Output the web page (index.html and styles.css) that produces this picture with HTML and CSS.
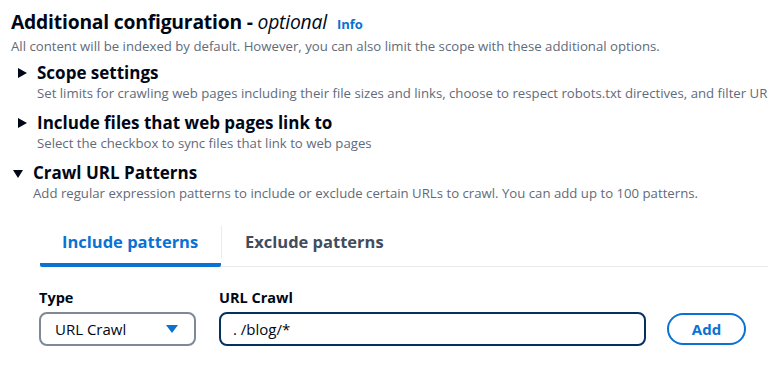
FILE: index.html
```html
<!DOCTYPE html>
<html lang="en">
<head>
    <meta charset="UTF-8">
    <title>Additional configuration</title>
    <link rel="stylesheet" href="styles.css">
</head>
<body>
    <div class="config">
        <div class="header">
            <h2>Additional configuration - <i>optional</i></h2>
            <a href="#" class="info">Info</a>
        </div>
        <p class="desc">All content will be indexed by default. However, you can also limit the scope with these additional options.</p>

        <!-- Collapsed sections -->
        <div class="section">
            <div class="section-title">
                <span class="caret"></span>
                <h3>Scope settings</h3>
            </div>
            <p class="desc">Set limits for crawling web pages including their file sizes and links, choose to respect robots.txt directives, and filter URLs</p>
        </div>

        <div class="section">
            <div class="section-title">
                <span class="caret"></span>
                <h3>Include files that web pages link to</h3>
            </div>
            <p class="desc">Select the checkbox to sync files that link to web pages</p>
        </div>

        <!-- Expanded section -->
        <div class="section open">
            <div class="section-title">
                <span class="caret down"></span>
                <h3>Crawl URL Patterns</h3>
            </div>
            <p class="desc">Add regular expression patterns to include or exclude certain URLs to crawl. You can add up to 100 patterns.</p>

            <div class="tabs">
                <button class="tab active">Include patterns</button>
                <span class="tab-sep"></span>
                <button class="tab">Exclude patterns</button>
            </div>

            <div class="pattern-row">
                <div class="field type-field">
                    <label>Type</label>
                    <div class="select">
                        <span>URL Crawl</span>
                        <span class="select-caret"></span>
                    </div>
                </div>
                <div class="field url-field">
                    <label for="urlCrawl">URL Crawl</label>
                    <input id="urlCrawl" type="text" value=". /blog/*">
                </div>
                <button class="add-btn">Add</button>
            </div>
        </div>
    </div>
</body>
</html>
```

FILE: styles.css
```css
* {
    margin: 0;
    padding: 0;
    box-sizing: border-box;
}

body {
    font-family: 'Open Sans', 'Noto Sans', sans-serif;
    color: #000716;
    background: white;
    overflow: hidden;
}

.config {
    padding: 9px 0 0 11px;
    width: 900px;
}

.header {
    display: flex;
    align-items: baseline;
    gap: 10px;
    margin-bottom: 2px;
}

.header h2 {
    font-size: 19.3px;
    font-weight: 700;
    line-height: 26px;
    letter-spacing: -0.2px;
}

.header h2 i {
    font-weight: 400;
}

.info {
    color: #0972d3;
    font-size: 13px;
    font-weight: 700;
    text-decoration: none;
}

.desc {
    color: #5f6b7a;
    font-size: 13.2px;
    line-height: 18px;
    white-space: nowrap;
}

.section {
    margin-top: 7px;
    padding-left: 26px;
}

.section + .section {
    margin-top: 10px;
}

.section.open {
    padding-left: 22px;
}

.section-title {
    display: flex;
    align-items: center;
    position: relative;
}

.section-title h3 {
    font-size: 17px;
    font-weight: 700;
    line-height: 22px;
}

.caret {
    position: absolute;
    left: -19px;
    top: 6px;
    width: 0;
    height: 0;
    border-top: 5px solid transparent;
    border-bottom: 5px solid transparent;
    border-left: 9px solid #000716;
}

.caret.down {
    left: -20px;
    top: 8px;
    border-left: 5px solid transparent;
    border-right: 5px solid transparent;
    border-top: 8px solid #000716;
    border-bottom: none;
}

/* Tabs */
.tabs {
    display: flex;
    align-items: center;
    margin-top: 21px;
    margin-left: 7px;
    border-bottom: 1px solid #e9ebed;
}

.tab {
    background: none;
    border: none;
    font-family: inherit;
    font-size: 16.5px;
    font-weight: 700;
    color: #414d5c;
    padding: 7px 22px 10px 23px;
    border-bottom: 4px solid transparent;
    margin-bottom: -1px;
    cursor: pointer;
}

.tab.active {
    color: #0972d3;
    border-bottom-color: #0972d3;
    border-radius: 2px;
    padding: 7px 10px 10px 22px;
    width: 181px;
    text-align: left;
}

.tab-sep {
    width: 1px;
    height: 32px;
    background: #e9ebed;
    margin-top: -6px;
}

/* Pattern row */
.pattern-row {
    display: flex;
    align-items: flex-end;
    margin-top: 21px;
    margin-left: 6px;
    gap: 23px;
}

.field label {
    display: block;
    font-size: 14.5px;
    font-weight: 700;
    line-height: 20px;
    margin-bottom: 4px;
}

.select {
    width: 157px;
    height: 34px;
    border: 2px solid #7d8998;
    border-radius: 8px;
    display: flex;
    align-items: center;
    justify-content: space-between;
    padding: 0 16px 0 14px;
    font-size: 15px;
    color: #000716;
}

.select-caret {
    width: 0;
    height: 0;
    border-left: 6px solid transparent;
    border-right: 6px solid transparent;
    border-top: 8px solid #0972d3;
}

.url-field input {
    width: 427px;
    height: 34px;
    border: 2px solid #033160;
    border-radius: 8px;
    padding: 0 12px;
    font-family: inherit;
    font-size: 15px;
    color: #000716;
    outline: none;
}

.add-btn {
    width: 79px;
    height: 32px;
    margin-left: -2px;
    margin-bottom: 1px;
    border: 2px solid #0972d3;
    border-radius: 20px;
    background: white;
    color: #0972d3;
    font-family: inherit;
    font-size: 15px;
    font-weight: 700;
    cursor: pointer;
}
```
